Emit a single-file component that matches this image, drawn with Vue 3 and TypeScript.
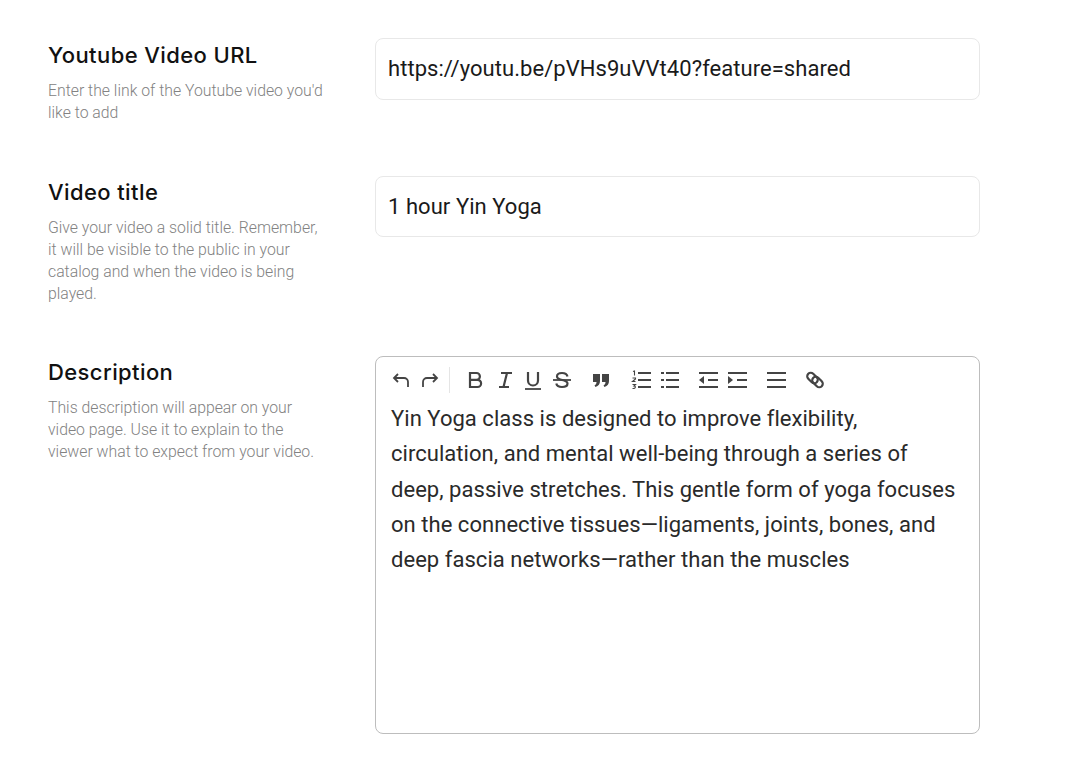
<script setup lang="ts">
const sections = [
  { title: 'Youtube Video URL', help: "Enter the link of the Youtube video you'd like to add", value: 'https://youtu.be/pVHs9uVVt40?feature=shared' },
  { title: 'Video title', help: 'Give your video a solid title. Remember, it will be visible to the public in your catalog and when the video is being played.', value: '1 hour Yin Yoga' },
]
</script>

<template>
  <main class="page">
    <section v-for="s in sections" :key="s.title" class="row">
      <div class="label">
        <h2>{{ s.title }}</h2>
        <p>{{ s.help }}</p>
      </div>
      <div class="input">{{ s.value }}</div>
    </section>
    <section class="row">
      <div class="label">
        <h2>Description</h2>
        <p>This description will appear on your video page. Use it to explain to the viewer what to expect from your video.</p>
      </div>
      <div class="editor">
        <div class="toolbar">
          <svg class="ic" viewBox="0 0 20 20"><path d="M7 4 3 8l4 4M3 8h10a4 4 0 0 1 4 4v5" /></svg>
          <svg class="ic" viewBox="0 0 20 20"><path d="m13 4 4 4-4 4M17 8H7a4 4 0 0 0-4 4v5" /></svg>
          <span class="sep"></span>
          <svg class="ic" viewBox="0 0 20 20"><path class="thick" d="M5 3h6.500a3.300 3.300 0 0 1 0 6.800H5zM5 9.800h7.500a3.500 3.500 0 0 1 0 7.200H5z" /></svg>
          <svg class="ic" viewBox="0 0 20 20"><path class="thick" d="M7 3h11M5 17h10M13 3l-3.500 14" /></svg>
          <svg class="ic" viewBox="0 0 20 20"><path class="thick" d="M5 2v8.500a5 5 0 0 0 10 0V2" /><path d="M2 19h16" /></svg>
          <svg class="ic" viewBox="0 0 20 20"><path class="thick" d="M15.500 6.500C15 4.300 13 3 10 3 7 3 5 4.300 5 6.500 5 11 15.500 9 15.500 13.500c0 2.200-2.500 3.500-5.500 3.500-3 0-5.200-1.300-5.700-3.500" /><path d="M1 10h18" /></svg>
          <svg class="ic q" viewBox="0 0 20 20"><path class="fill" d="M2 4h7v7c0 3-1.500 5-4.500 6l-1-1.500C5 14.500 5.500 13.500 5.500 12H2zM11 4h7v7c0 3-1.500 5-4.500 6l-1-1.500c1.500-1 2-2 2-3.500H11z" /></svg>
          <svg class="ic l1" viewBox="0 0 20 20"><path class="line" d="M7 3h13M7 10h13M7 17h13" /><path class="num" d="M2 1.500 3.500 1v4.500M1.500 8h3v1l-3 2.500h3M1.500 14.500h3l-1.500 1.500c2 0 2 3-1.500 2.500" /></svg>
          <svg class="ic" viewBox="0 0 20 20"><path class="line" d="M6 3h13M6 10h13M6 17h13M1 3h3M1 10h3M1 17h3" /></svg>
          <svg class="ic in" viewBox="0 0 20 20"><path class="line" d="M1 3h19M10 10h10M1 17h19" /><path class="fill" d="M6 6v8l-5-4z" /></svg>
          <svg class="ic" viewBox="0 0 20 20"><path class="line" d="M1 3h19M10 10h10M1 17h19" /><path class="fill" d="M1 6v8l5-4z" /></svg>
          <svg class="ic al" viewBox="0 0 20 20"><path class="line" d="M1 3h19M1 10h19M1 17h19" /></svg>
          <svg class="ic ln" viewBox="0 0 20 20"><g class="thick link"><rect x="1.500" y="4.500" width="12" height="7" rx="3.500" transform="rotate(45 7.500 8)" /><rect x="6.500" y="8.500" width="12" height="7" rx="3.500" transform="rotate(45 12.500 12)" /></g></svg>
        </div>
        <p class="body">Yin Yoga class is designed to improve flexibility, circulation, and mental well-being through a series of deep, passive stretches. This gentle form of yoga focuses on the connective tissues—ligaments, joints, bones, and deep fascia networks—rather than the muscles</p>
      </div>
    </section>
  </main>
</template>

<style scoped>
.page {
  width: 980px;
  height: 770px;
  box-sizing: border-box;
  padding: 38px 0 0 48px;
  display: flex;
  flex-direction: column;
  gap: 51px;
  font-family: Roboto, sans-serif;
  background: #fff;
}
.row {
  display: grid;
  grid-template-columns: 327px 605px;
  align-items: start;
}
.row:first-child { margin-bottom: 1px; }
.row:first-child .label { padding-top: 1px; }
.label { padding-right: 47px; }
h2 {
  margin: 3px 0 0;
  font: 500 22px/26px Inter, sans-serif;
  letter-spacing: 0.4px;
  color: #111;
}
.label p {
  margin: 12px 0 0;
  font-weight: 300;
  font-size: 15.800px;
  line-height: 22px;
  color: #828282;
}
.input {
  box-sizing: border-box;
  height: 62px;
  padding: 0 12px 2px;
  display: flex;
  align-items: center;
  border: 1px solid #e8e8e8;
  border-radius: 8px;
  font-size: 22px;
  letter-spacing: 0.05px;
  color: #1a1a1a;
}
.row:nth-child(2) .input { height: 61px; padding-bottom: 0; }
.editor {
  box-sizing: border-box;
  height: 378px;
  border: 1px solid #bdbdbd;
  border-radius: 8px;
  padding: 9px 20px 8px 15px;
}
.toolbar {
  display: flex;
  align-items: center;
  height: 28px;
  gap: 9px;
}
.ic {
  width: 20px;
  height: 20px;
  flex: none;
  fill: none;
  stroke: #444;
  stroke-width: 1.800;
}
.thick { stroke-width: 2.200; }
.link { fill: none; }
.line { stroke-width: 2; }
.fill { fill: #444; stroke: none; }
.num { stroke-width: 1.100; }
.sep {
  width: 1px;
  height: 26px;
  background: #e5e5e5;
  margin: 0 6px 0 0;
}
.q, .in, .al, .ln { margin-left: 10px; }
.l1 { margin-left: 11px; }
.in { margin-left: 9px; }
.body {
  margin: 7px 0 0;
  font-size: 22px;
  letter-spacing: 0.04px;
  line-height: 35.300px;
  color: #2a2a2a;
}
</style>
